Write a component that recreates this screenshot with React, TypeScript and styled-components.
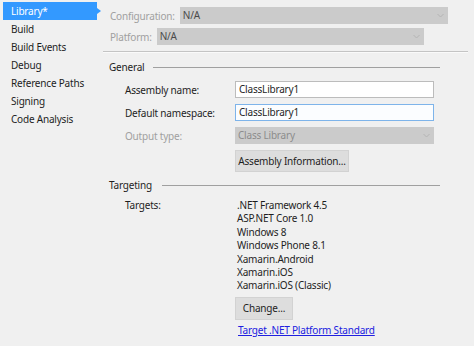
import React from 'react';
import styled, { createGlobalStyle } from 'styled-components';

const GlobalStyle = createGlobalStyle`
  html, body {
    margin: 0;
    padding: 0;
    background: #f0f0f0;
  }
  body {
    font-family: "Noto Sans", "Open Sans", sans-serif;
    font-size: 10px;
    letter-spacing: -0.2px;
    color: #1e1e1e;
  }
`;

const Page = styled.div`
  width: 474px;
  height: 346px;
  display: flex;
  background: #f0f0f0;
  overflow: hidden;
`;

const Sidebar = styled.ul`
  list-style: none;
  margin: 0;
  padding: 2px 0 0 3px;
  width: 100px;
  box-sizing: border-box;
  flex-shrink: 0;
`;

const NavItem = styled.li<{ active?: boolean }>`
  position: relative;
  height: 18px;
  line-height: 18px;
  padding-left: 8px;
  width: 94px;
  box-sizing: border-box;
  white-space: nowrap;
  color: ${p => (p.active ? '#ffffff' : '#1e1e1e')};
  background: ${p => (p.active ? '#3399ff' : 'transparent')};

  ${p =>
    p.active &&
    `
    &::after {
      content: '';
      position: absolute;
      right: -4px;
      top: 6px;
      border-left: 4px solid #3399ff;
      border-top: 3px solid transparent;
      border-bottom: 3px solid transparent;
    }
  `}
`;

const Main = styled.div`
  flex: 1;
  padding: 7px 6px 0 3px;
  display: flex;
  flex-direction: column;
`;

const TopRow = styled.div<{ width: number }>`
  display: flex;
  align-items: center;
  gap: 5px;
  height: 17px;
  margin-bottom: 4px;
  padding-left: 7px;
  width: ${p => p.width}px;
  box-sizing: border-box;
`;

const DimLabel = styled.span`
  color: #a0a0a0;
  white-space: nowrap;
`;

const Combo = styled.div<{ dark?: boolean }>`
  flex: 1;
  height: 17px;
  background: #cbcbcb;
  color: ${p => (p.dark ? '#4a4a4a' : '#8c8c8c')};
  display: flex;
  align-items: center;
  justify-content: space-between;
  padding: 0 4px 0 3px;
  box-sizing: border-box;
  line-height: 17px;
`;

const Chevron = () => (
  <svg width="7" height="5" viewBox="0 0 7 5">
    <path d="M0.5 1 L3.5 4 L6.5 1" fill="none" stroke="#b4b4b4" strokeWidth="1" />
  </svg>
);

const Separator = styled.div`
  height: 1px;
  background: #c4c4c4;
  border-bottom: 1px solid #fafafa;
  margin: 2px 0 6px 0;
`;

const SectionHeader = styled.div<{ width: number; lineGap: number }>`
  display: flex;
  align-items: center;
  height: 16px;
  padding-left: 6px;
  width: ${p => p.width}px;
  box-sizing: border-box;
  gap: ${p => p.lineGap}px;

  &::after {
    content: '';
    flex: 1;
    height: 1px;
    background: #a0a0a0;
  }
`;

const Form = styled.div`
  display: grid;
  grid-template-columns: 110px 199px;
  row-gap: 6px;
  padding-left: 22px;
  margin-top: 6px;
  align-items: center;
`;

const Label = styled.span<{ dim?: boolean }>`
  color: ${p => (p.dim ? '#a0a0a0' : '#1e1e1e')};
  white-space: nowrap;
`;

const TextBox = styled.div<{ focused?: boolean }>`
  height: 17px;
  box-sizing: border-box;
  border: 1px solid ${p => (p.focused ? '#7eb4ea' : '#bcbcbc')};
  background: ${p => (p.focused ? '#fbfdff' : '#ffffff')};
  padding: 0 3px;
  line-height: 15px;
  color: #1e1e1e;
`;

const Button = styled.div<{ width: number; height: number }>`
  width: ${p => p.width}px;
  height: ${p => p.height}px;
  box-sizing: border-box;
  background: #dddddd;
  border: 1px solid #d2d2d2;
  display: flex;
  align-items: center;
  justify-content: center;
  color: #1e1e1e;
  white-space: nowrap;
`;

const Targets = styled.div`
  display: grid;
  grid-template-columns: 110px auto;
  padding-left: 22px;
  margin-top: 6px;
  line-height: 13.4px;
`;

const TargetsRight = styled.div`
  display: flex;
  flex-direction: column;
  align-items: flex-start;
  gap: 4px;
`;

const TargetList = styled.div`
  display: flex;
  flex-direction: column;
  padding-left: 2px;
`;

const Link = styled.a`
  color: #2020e0;
  text-decoration: underline;
  cursor: pointer;
  white-space: nowrap;
  padding-left: 3px;
`;

const navItems = ['Library*', 'Build', 'Build Events', 'Debug', 'Reference Paths', 'Signing', 'Code Analysis'];

const targets = [
  '.NET Framework 4.5',
  'ASP.NET Core 1.0',
  'Windows 8',
  'Windows Phone 8.1',
  'Xamarin.Android',
  'Xamarin.iOS',
  'Xamarin.iOS (Classic)',
];

export default function App() {
  return (
    <>
      <GlobalStyle />
      <Page>
        <Sidebar>
          {navItems.map((item, i) => (
            <NavItem key={item} active={i === 0}>
              {item}
            </NavItem>
          ))}
        </Sidebar>
        <Main>
          <TopRow width={345}>
            <DimLabel>Configuration:</DimLabel>
            <Combo dark>
              N/A
              <Chevron />
            </Combo>
          </TopRow>
          <TopRow width={321}>
            <DimLabel>Platform:</DimLabel>
            <Combo dark>
              N/A
              <Chevron />
            </Combo>
          </TopRow>
          <Separator />
          <SectionHeader width={337} lineGap={9}>General</SectionHeader>
          <Form>
            <Label>Assembly name:</Label>
            <TextBox>ClassLibrary1</TextBox>
            <Label>Default namespace:</Label>
            <TextBox focused>ClassLibrary1</TextBox>
            <Label dim>Output type:</Label>
            <Combo>
              Class Library
              <Chevron />
            </Combo>
            <span />
            <Button width={114} height={22}>Assembly Information...</Button>
          </Form>
          <div style={{ height: 5 }} />
          <SectionHeader width={337} lineGap={10}>Targeting</SectionHeader>
          <Targets>
            <Label>Targets:</Label>
            <TargetsRight>
              <TargetList>
                {targets.map(t => (
                  <span key={t}>{t}</span>
                ))}
              </TargetList>
              <Button width={58} height={23}>Change...</Button>
              <Link>Target .NET Platform Standard</Link>
            </TargetsRight>
          </Targets>
        </Main>
      </Page>
    </>
  );
}
